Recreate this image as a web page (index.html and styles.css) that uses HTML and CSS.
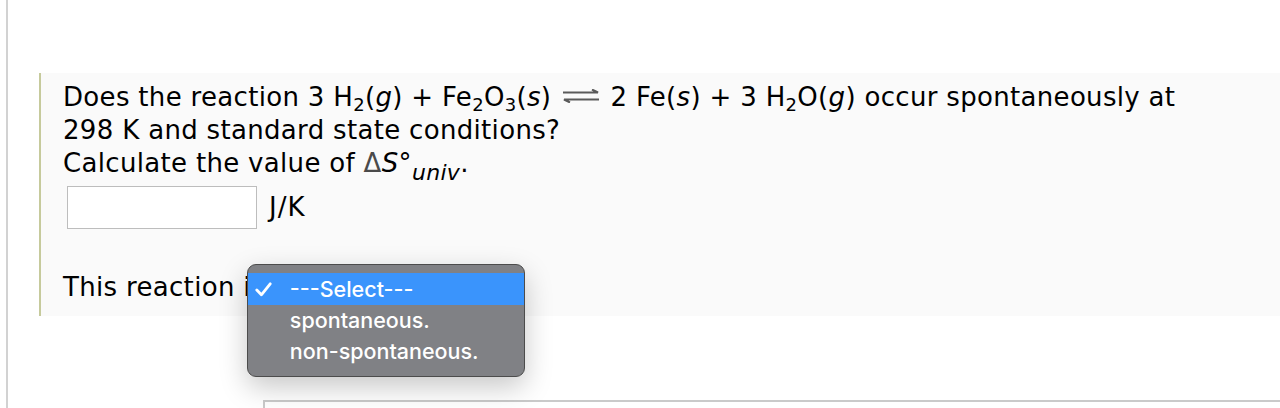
FILE: index.html
```html
<!DOCTYPE html>
<html lang="en">
<head>
  <meta charset="UTF-8">
  <title>Spontaneity question</title>
  <link rel="stylesheet" href="styles.css">
</head>
<body>
  <div class="page">
    <div class="question">
      <div class="stem">
        Does the reaction 3 H<sub>2</sub>(<i>g</i>) + Fe<sub>2</sub>O<sub>3</sub>(<i>s</i>)
        <svg class="eq-arrow" width="38" height="14" viewBox="0 0 38 14">
          <path d="M1 3.5 H36 L30 0.5" fill="none" stroke="#5a5a5a" stroke-width="2"/>
          <path d="M37 10.5 H2 L8 13.5" fill="none" stroke="#5a5a5a" stroke-width="2"/>
        </svg>
        2 Fe(<i>s</i>) + 3 H<sub>2</sub>O(<i>g</i>) occur spontaneously at 298 K and standard state conditions?<br>
        Calculate the value of <span class="delta">Δ</span><i>S</i>°<sub class="univ"><i>univ</i></sub>.
      </div>

      <div class="answer-row">
        <input class="answer-input" type="text">
        <span class="unit">J/K</span>
      </div>

      <div class="select-row">
        This reaction i<span class="select-anchor">
          <div class="menu">
            <div class="menu-item selected">
              <svg class="check" width="17" height="15" viewBox="0 0 17 15">
                <path d="M1.8 8 L6.4 12.8 L15.2 1.8" fill="none" stroke="#fff" stroke-width="2.8" stroke-linecap="round" stroke-linejoin="round"/>
              </svg>
              ---Select---
            </div>
            <div class="menu-item">spontaneous.</div>
            <div class="menu-item">non-spontaneous.</div>
          </div>
        </span>
      </div>
    </div>

    <div class="next-box"></div>
  </div>
</body>
</html>
```

FILE: styles.css
```css
body {
  margin: 0;
  background: #fff;
  font-family: "DejaVu Sans", Verdana, sans-serif;
  color: #000;
  overflow: hidden;
}
.page {
  margin-left: 6px;
  border-left: 2px solid #d2d2d2;
  height: 408px;
  padding-top: 73px;
  box-sizing: border-box;
}
.question {
  margin-left: 31px;
  border-left: 2px solid #c6ca9c;
  background: #fafafa;
  padding: 8px 0 12px 22px;
  font-size: 26px;
  letter-spacing: 0.32px;
  line-height: 33px;
}
.stem {
  width: 1140px;
}
.stem sub {
  font-size: 18px;
  line-height: 0;
  vertical-align: -5px;
}
.stem .univ {
  vertical-align: -8px;
  font-size: 22px;
}
.eq-arrow {
  vertical-align: 3px;
  margin: 0 2px;
}
.delta {
  color: #4a4a4a;
}
.answer-row {
  display: flex;
  align-items: center;
  gap: 12px;
  margin-top: 6px;
  margin-left: 4px;
}
.answer-input {
  width: 190px;
  height: 43px;
  box-sizing: border-box;
  border: 1px solid #bdbdbd;
  background: #fff;
  margin: 0;
}
.unit {
  font-size: 26px;
  letter-spacing: 1px;
}
.select-row {
  margin-top: 42px;
}
.select-anchor {
  position: relative;
}
.menu {
  position: absolute;
  left: -4px;
  top: -8px;
  width: 278px;
  height: 113px;
  box-sizing: border-box;
  background: #808185;
  border: 1px solid #4c4c4c;
  border-radius: 9px;
  padding-top: 8px;
  box-shadow: 0 10px 28px rgba(0, 0, 0, 0.22);
  font-family: Inter, "Liberation Sans", sans-serif;
  font-weight: 500;
  font-size: 21.5px;
  letter-spacing: 0;
  line-height: 31px;
  color: #fff;
  z-index: 2;
}
.menu-item {
  padding-left: 42px;
  height: 31px;
  position: relative;
}
.menu-item.selected {
  background: #3a94fc;
  height: 32px;
  line-height: 32px;
}
.check {
  position: absolute;
  left: 7px;
  top: 9px;
}
.next-box {
  margin: 84px 0 0 255px;
  border-top: 2px solid #cacaca;
  border-left: 2px solid #cacaca;
  height: 10px;
}
```
